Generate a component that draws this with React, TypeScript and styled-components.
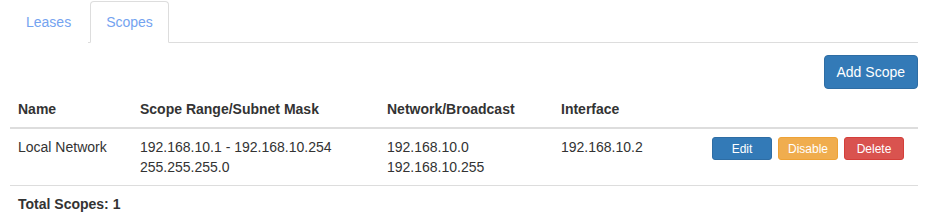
import React from "react";
import styled, { createGlobalStyle } from "styled-components";

const GlobalStyle = createGlobalStyle`
  * {
    box-sizing: border-box;
  }
  body {
    margin: 0;
    background: #fff;
    font-family: "Liberation Sans", Arial, sans-serif;
    font-size: 14px;
    line-height: 20px;
    color: #333;
  }
`;

const Page = styled.div`
  padding: 0 10px;
`;

const Tabs = styled.ul`
  display: flex;
  list-style: none;
  margin: 0;
  padding: 1px 0 0;
  border-bottom: 1px solid #ddd;
`;

const Tab = styled.li<{ $active?: boolean }>`
  margin-right: 2px;
  margin-bottom: -1px;
  padding: 10px 15px;
  line-height: 20px;
  color: #74a3f0;
  border: 1px solid ${({ $active }) => ($active ? "#ddd" : "transparent")};
  border-bottom-color: ${({ $active }) => ($active ? "#fff" : "transparent")};
  border-radius: 4px 4px 0 0;
  background: #fff;
  &:first-child {
    padding-right: 16px;
  }
`;

const Toolbar = styled.div`
  display: flex;
  justify-content: flex-end;
  padding-top: 12px;
  margin-bottom: 2px;
`;

const Button = styled.button`
  font-family: inherit;
  font-size: 14px;
  line-height: 20px;
  height: 34px;
  padding: 6px 12px;
  color: #fff;
  background: #337ab7;
  border: 1px solid #2e6da4;
  border-radius: 4px;
`;

const variants = {
  primary: { bg: "#337ab7", border: "#2e6da4" },
  warning: { bg: "#f0ad4e", border: "#eea236" },
  danger: { bg: "#d9534f", border: "#d43f3a" },
};

const SmallButton = styled.button<{ $kind: keyof typeof variants }>`
  flex: 0 0 60px;
  width: 60px;
  height: 23px;
  padding: 0 5px;
  font-family: inherit;
  font-size: 12px;
  line-height: 18px;
  color: #fff;
  background: ${({ $kind }) => variants[$kind].bg};
  border: 1px solid ${({ $kind }) => variants[$kind].border};
  border-radius: 3px;
`;

const Actions = styled.div`
  display: flex;
  gap: 6px;
`;

const Table = styled.table`
  width: 100%;
  table-layout: fixed;
  border-collapse: collapse;
  border-spacing: 0;
`;

const Th = styled.th<{ $w?: number }>`
  text-align: left;
  padding: 8px;
  line-height: 20px;
  font-weight: bold;
  border-bottom: 2px solid #ddd;
  width: ${({ $w }) => ($w ? `${$w}px` : "auto")};
`;

const Td = styled.td`
  padding: 8px;
  line-height: 20px;
  vertical-align: top;
  border-bottom: 1px solid #ddd;
`;

const Footer = styled.div`
  padding: 8px;
  font-weight: bold;
  line-height: 20px;
`;

export default function App() {
  return (
    <>
      <GlobalStyle />
      <Page>
        <Tabs>
          <Tab>Leases</Tab>
          <Tab $active>Scopes</Tab>
        </Tabs>
        <Toolbar>
          <Button>Add Scope</Button>
        </Toolbar>
        <Table>
          <thead>
            <tr>
              <Th $w={122}>Name</Th>
              <Th $w={247}>Scope Range/Subnet Mask</Th>
              <Th $w={174}>Network/Broadcast</Th>
              <Th $w={151}>Interface</Th>
              <Th></Th>
            </tr>
          </thead>
          <tbody>
            <tr>
              <Td>Local Network</Td>
              <Td>
                192.168.10.1 - 192.168.10.254
                <br />
                255.255.255.0
              </Td>
              <Td>
                192.168.10.0
                <br />
                192.168.10.255
              </Td>
              <Td>192.168.10.2</Td>
              <Td>
                <Actions>
                  <SmallButton $kind="primary">Edit</SmallButton>
                  <SmallButton $kind="warning">Disable</SmallButton>
                  <SmallButton $kind="danger">Delete</SmallButton>
                </Actions>
              </Td>
            </tr>
          </tbody>
        </Table>
        <Footer>Total Scopes: 1</Footer>
      </Page>
    </>
  );
}
